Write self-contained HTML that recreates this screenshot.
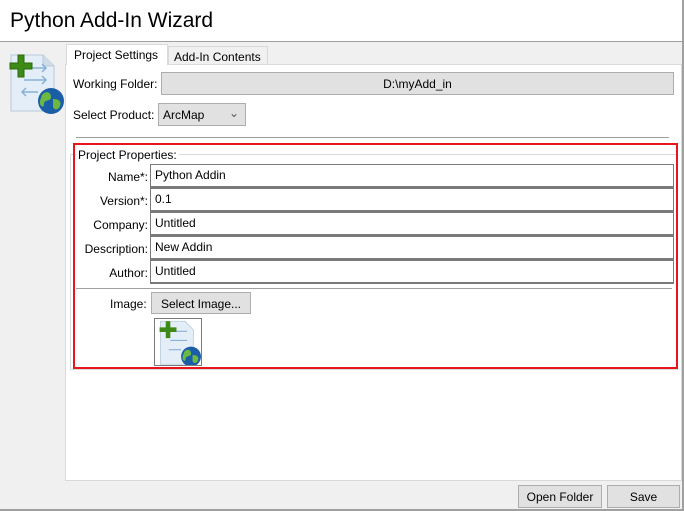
<!DOCTYPE html>
<html><head><style>
*{box-sizing:border-box;margin:0;padding:0}
body{width:684px;height:511px;background:#f0f0f0;font-family:"Liberation Sans","DejaVu Sans",sans-serif;font-size:12px;color:#000;position:relative;overflow:hidden}
.a{position:absolute}
.lbl{position:absolute;text-align:right;width:80px;left:68px}
.fld{position:absolute;left:150px;width:524px;height:24px;background:#fff;border:1px solid #7a7a7a;border-bottom:2px solid #7a7a7a;padding:3px 4px}
.btn{position:absolute;background:#e1e1e1;border:1px solid #adadad;text-align:center}
</style></head><body>
<div class="a" style="left:0;top:0;width:684px;height:42px;background:#fff;border-bottom:1px solid #a0a0a0;border-right:2px solid #a0a0a0"></div>
<div class="a" style="left:10px;top:9px;font-size:21px">Python Add-In Wizard</div>
<div class="a" style="right:0;top:42px;width:2px;height:469px;background:#a0a0a0"></div>
<div class="a" style="left:0;bottom:0;width:684px;height:2px;background:#a0a0a0"></div>
<svg class="a" style="left:6px;top:50px" width="60" height="66" viewBox="0 0 60 66">
<path d="M5 5h32l11 11v45H5z" fill="#e4eef8" stroke="#b8c8d8"/>
<path d="M37 5v11h11" fill="#cfdbe8" stroke="#b8c8d8"/>
<path d="M18 18h22M36 14l4 4-4 4M18 30h22M36 26l4 4-4 4M32 42H16M20 38l-4 4 4 4" stroke="#8ab0d8" stroke-width="1.5" fill="none"/>
<path d="M4 13h8V5h6v8h8v6h-8v8h-6v-8H4z" fill="#3e8a16" stroke="#2b6a0c"/>
<circle cx="45" cy="51" r="13" fill="#1b5ea8"/>
<path d="M36 45c4-5 9-3 9 2s-7 2-7 7-5 2-4-3zM47 49c5 0 9 2 7 7s-7 4-7 0z" fill="#6cb840"/>
</svg>
<div class="a" style="left:65px;top:64px;width:617px;height:417px;background:#fff;border:1px solid #d9d9d9"></div>
<div class="a" style="left:66px;top:44px;width:102px;height:21px;background:#fff;border:1px solid #d9d9d9;border-bottom:none;padding:3px 0 0 7px">Project Settings</div>
<div class="a" style="left:168px;top:46px;width:100px;height:19px;background:#f0f0f0;border:1px solid #d9d9d9;padding:3px 0 0 5px">Add-In Contents</div>
<div class="a" style="left:73px;top:77px">Working Folder:</div>
<div class="a" style="left:161px;top:72px;width:513px;height:23px;background:#e1e1e1;border:1px solid #adadad;text-align:center;padding-top:4px">D:\myAdd_in</div>
<div class="a" style="left:73px;top:108px">Select Product:</div>
<div class="a" style="left:158px;top:103px;width:88px;height:23px;background:#e1e1e1;border:1px solid #adadad;padding:4px 0 0 4px">ArcMap<span style="position:absolute;right:6px;top:2px;color:#555">&#8964;</span></div>
<div class="a" style="left:76px;top:137px;width:593px;height:1px;background:#a0a0a0"></div>
<div class="a" style="left:70px;top:154px;width:608px;height:216px;border:1px solid #d9d9d9"></div>
<div class="a" style="left:73px;top:143px;width:605px;height:226px;border:2px solid #e8141e"></div>
<div class="a" style="left:76px;top:148px;background:#fff;padding:0 2px">Project Properties:</div>
<div class="lbl" style="top:170px">Name*:</div><div class="fld" style="top:164px">Python Addin</div>
<div class="lbl" style="top:194px">Version*:</div><div class="fld" style="top:188px">0.1</div>
<div class="lbl" style="top:218px">Company:</div><div class="fld" style="top:212px">Untitled</div>
<div class="lbl" style="top:242px">Description:</div><div class="fld" style="top:236px">New Addin</div>
<div class="lbl" style="top:266px">Author:</div><div class="fld" style="top:260px">Untitled</div>
<div class="a" style="left:76px;top:288px;width:596px;height:1px;background:#a0a0a0"></div>
<div class="a" style="left:110px;top:297px">Image:</div>
<div class="btn" style="left:151px;top:292px;width:100px;height:22px;padding-top:4px">Select Image...</div>
<div class="a" style="left:154px;top:318px;width:48px;height:48px;border:1px solid #7a7a7a;background:#fff"></div>
<svg class="a" style="left:155px;top:319px" width="46" height="46" viewBox="2 2 52 60"><path d="M5 5h32l11 11v45H5z" fill="#e4eef8" stroke="#b8c8d8"/><path d="M18 18h22M18 30h22M32 42H16" stroke="#8ab0d8" stroke-width="1.5"/><path d="M4 13h8V5h6v8h8v6h-8v8h-6v-8H4z" fill="#3e8a16"/><circle cx="45" cy="51" r="13" fill="#1b5ea8"/><path d="M36 45c4-5 9-3 9 2s-7 2-7 7-5 2-4-3zM47 49c5 0 9 2 7 7s-7 4-7 0z" fill="#6cb840"/></svg>
<div class="btn" style="left:518px;top:485px;width:84px;height:23px;padding-top:4px">Open Folder</div>
<div class="btn" style="left:607px;top:485px;width:73px;height:23px;padding-top:4px">Save</div>
</body></html>
